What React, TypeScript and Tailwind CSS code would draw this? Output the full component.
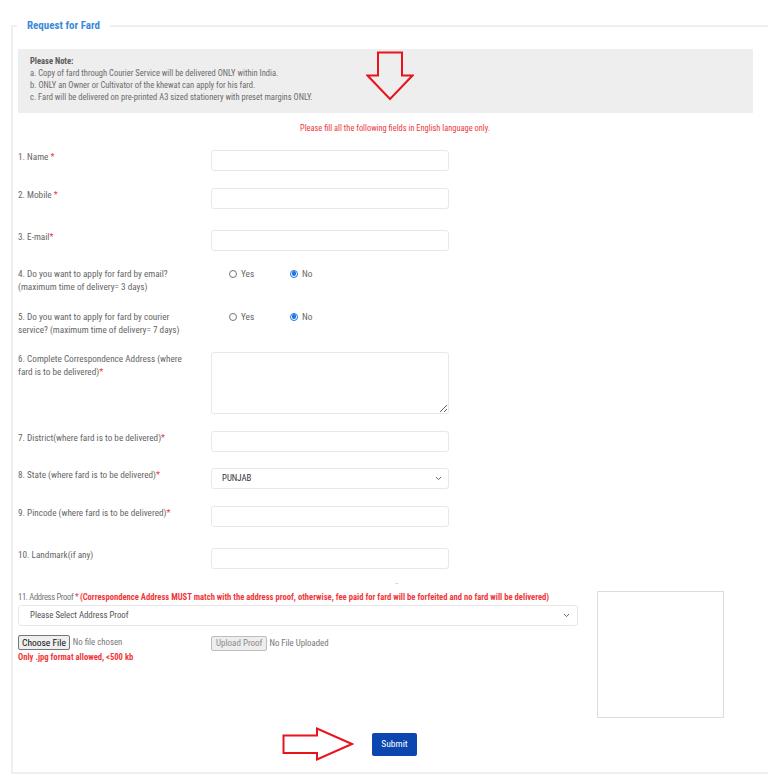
import React from "react";

function Req() {
  return <span className="text-[#f0383a]">*</span>;
}

function TextInput() {
  return (
    <input
      type="text"
      readOnly
      className="w-[238px] h-[21px] shrink-0 rounded-[3px] border border-[#e8e8e8] bg-white outline-none"
    />
  );
}

function Chevron() {
  return (
    <svg width="7" height="5" viewBox="0 0 7 5" className="shrink-0">
      <path d="M1 1 L3.5 3.6 L6 1" fill="none" stroke="#666" strokeWidth="1" />
    </svg>
  );
}

function Radio({ checked }: { checked?: boolean }) {
  if (checked) {
    return (
      <span className="flex h-[8px] w-[8px] items-center justify-center rounded-full border border-[#1a73e8] bg-white">
        <span className="h-[4.5px] w-[4.5px] rounded-full bg-[#1a73e8]" />
      </span>
    );
  }
  return <span className="h-[8px] w-[8px] rounded-full border border-[#767676] bg-white" />;
}

function RadioGroup() {
  return (
    <div className="flex items-center pl-[18px]">
      <div className="flex w-[61px] items-center gap-[4px]">
        <Radio />
        <span className="text-[9.3px] leading-[13px] text-[#666]">Yes</span>
      </div>
      <div className="flex items-center gap-[4px]">
        <Radio checked />
        <span className="text-[9.3px] leading-[13px] text-[#666]">No</span>
      </div>
    </div>
  );
}

function Label({ children }: { children: React.ReactNode }) {
  return (
    <div className="w-[193px] shrink-0 text-[9.2px] leading-[13px] text-[#666]">{children}</div>
  );
}

export default function App() {
  return (
    <div
      className="h-[776px] w-full overflow-hidden bg-white text-[#666] font-stretch-condensed"
      style={{ fontFamily: "Roboto, 'Noto Sans', sans-serif" }}
    >
      <fieldset className="ml-[11px] mt-[19px] w-[790px] border-2 border-[#efefef] p-0">
        <legend className="ml-[4px] px-[10px] text-[11px] font-bold leading-[14px] text-[#3b8ad9]">
          Request for Fard
        </legend>

        <div className="pl-[5px]">
          {/* Note box */}
          <div className="relative mt-[16px] h-[64px] w-[735px] bg-[#eeeeee] pl-[12px] pt-[6px] text-[8.5px] leading-[12px] text-[#6b6b6b]">
            <div className="font-bold text-[#5a5a5a]">Please Note:</div>
            <div>a. Copy of fard through Courier Service will be delivered ONLY within India.</div>
            <div>b. ONLY an Owner or Cultivator of the khewat can apply for his fard.</div>
            <div>c. Fard will be delivered on pre-printed A3 sized stationery with preset margins ONLY.</div>
            <svg
              className="absolute left-[348px] top-[2px]"
              width="48"
              height="50"
              viewBox="0 0 48 50"
            >
              <polygon
                points="12,1.5 36,1.5 36,24.5 46.5,24.5 24,48 1.5,24.5 12,24.5"
                fill="none"
                stroke="#e8141c"
                strokeWidth="2"
              />
            </svg>
          </div>

          {/* English note */}
          <div className="mt-[9px] w-[754px] text-center text-[8.4px] leading-[12px] text-[#f0383a]">
            Please fill all the following fields in English language only.
          </div>

          {/* Rows */}
          <div className="mt-[16px] flex items-start">
            <Label>
              1. Name <Req />
            </Label>
            <TextInput />
          </div>

          <div className="mt-[17px] flex items-start">
            <Label>
              2. Mobile <Req />
            </Label>
            <TextInput />
          </div>

          <div className="mt-[21px] flex items-start">
            <Label>
              3. E-mail<Req />
            </Label>
            <TextInput />
          </div>

          <div className="mt-[16px] flex items-start">
            <Label>
              4. Do you want to apply for fard by email?
              <br />
              (maximum time of delivery= 3 days)
            </Label>
            <RadioGroup />
          </div>

          <div className="mt-[17px] flex items-start">
            <Label>
              5. Do you want to apply for fard by courier
              <br />
              service? (maximum time of delivery= 7 days)
            </Label>
            <RadioGroup />
          </div>

          <div className="mt-[16px] flex items-start">
            <Label>
              6. Complete Correspondence Address (where
              <br />
              fard is to be delivered)<Req />
            </Label>
            <textarea
              readOnly
              className="h-[62px] w-[238px] shrink-0 rounded-[3px] border border-[#e8e8e8] bg-white outline-none"
            />
          </div>

          <div className="mt-[17px] flex items-start">
            <Label>
              7. District(where fard is to be delivered)<Req />
            </Label>
            <TextInput />
          </div>

          <div className="mt-[16px] flex items-start">
            <Label>
              8. State (where fard is to be delivered)<Req />
            </Label>
            <div className="flex h-[21px] w-[238px] shrink-0 items-center justify-between rounded-[3px] border border-[#e8e8e8] bg-white pl-[10px] pr-[6px]">
              <span className="text-[8.8px] text-[#333]">PUNJAB</span>
              <Chevron />
            </div>
          </div>

          <div className="mt-[17px] flex items-start">
            <Label>
              9. Pincode (where fard is to be delivered)<Req />
            </Label>
            <TextInput />
          </div>

          <div className="mt-[21px] flex items-start">
            <Label>10. Landmark(if any)</Label>
            <TextInput />
          </div>

          {/* small dash */}
          <div className="h-[22px] pl-[377px] pt-[11px] text-[6px] leading-[6px] text-[#999]">–</div>

          {/* Address proof section */}
          <div className="flex items-start gap-[19px]">
            <div className="w-[560px] shrink-0">
              <div className="h-[12px] whitespace-nowrap text-[8.6px] leading-[12px]">
                <span className="tracking-[-0.35px] text-[#777]">
                  11. Address Proof <Req />{" "}
                </span>
                <span className="font-bold text-[#f0383a]">
                  (Correspondence Address MUST match with the address proof, otherwise, fee paid for fard will be forfeited and no fard will be delivered)
                </span>
              </div>
              <div className="mt-[2px] flex h-[21px] w-[560px] items-center justify-between rounded-[3px] border border-[#e8e8e8] bg-white pl-[11px] pr-[7px]">
                <span className="text-[8.8px] text-[#555]">Please Select Address Proof</span>
                <Chevron />
              </div>
              <div className="mt-[9px] flex items-start">
                <div className="w-[193px] shrink-0">
                  <div className="flex items-center">
                    <button className="h-[15px] rounded-[2px] border border-[#767676] bg-[#efefef] px-[3px] text-[9.5px] leading-[13px] text-[#111]">
                      Choose File
                    </button>
                    <span className="ml-[3px] text-[8.8px] text-[#777]">No file chosen</span>
                  </div>
                  <div className="mt-[1px] text-[8.6px] font-bold leading-[12px] text-[#f0383a]">
                    Only .jpg format allowed, &lt;500 kb
                  </div>
                </div>
                <div className="flex items-center pt-[1px]">
                  <button className="h-[15px] rounded-[2px] border border-[#bdbdbd] bg-[#eeeeee] px-[4px] text-[9px] leading-[13px] text-[#8a8a8a]">
                    Upload Proof
                  </button>
                  <span className="ml-[2px] text-[8.8px] text-[#777]">No File Uploaded</span>
                </div>
              </div>
            </div>
            <div className="h-[127px] w-[127px] shrink-0 border border-[#dcdcdc] bg-white" />
          </div>

          {/* Submit row */}
          <div className="mt-[9px] flex items-center pb-[11px] pl-[264px]">
            <svg width="72" height="34" viewBox="0 0 72 34" className="shrink-0">
              <polygon
                points="1.5,8.5 35,8.5 35,1.5 70,17 35,32.5 35,26 1.5,26"
                fill="none"
                stroke="#e8141c"
                strokeWidth="2"
              />
            </svg>
            <button className="ml-[18px] h-[23px] w-[45px] rounded-[2px] bg-[#0b47ae] text-[9.5px] text-white">
              Submit
            </button>
          </div>
        </div>
      </fieldset>
    </div>
  );
}
